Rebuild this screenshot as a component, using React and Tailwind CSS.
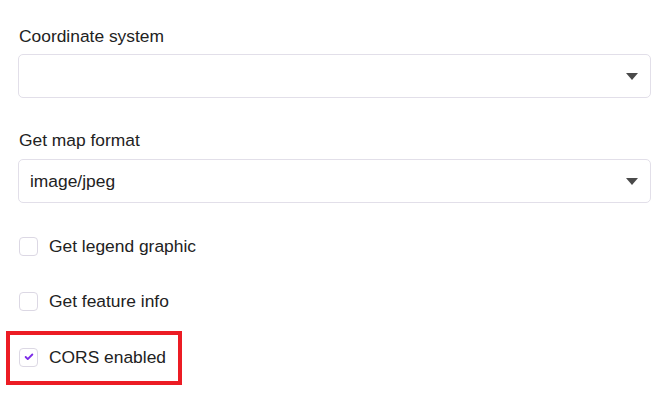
import { Check } from 'lucide-react';

function Caret() {
  return (
    <svg width="12" height="7" viewBox="0 0 12 7" className="shrink-0">
      <path d="M0 0 H12 L6 7 Z" fill="#4a4a4a" />
    </svg>
  );
}

function SelectBox({ value }) {
  return (
    <div className="flex h-[44px] w-[633px] items-center justify-between rounded-[5px] border border-[#e2dfe9] bg-white pl-[11px] pr-[12px]">
      <span className="text-[17.4px] text-[#222222]">{value}</span>
      <Caret />
    </div>
  );
}

function CheckRow({ label, checked }) {
  return (
    <label className="flex h-[24px] items-center gap-[11px]">
      <span className="flex h-[19px] w-[19px] items-center justify-center rounded-[4px] border border-[#dcd8e4] bg-white">
        {checked && <Check className="h-[10px] w-[10px] text-[#7c2be8]" strokeWidth={4.5} />}
      </span>
      <span className="text-[17.4px] text-[#222222]">{label}</span>
    </label>
  );
}

export default function App() {
  return (
    <div className="min-h-screen bg-white pl-[18px] pt-[24px] font-['Liberation_Sans',Arial,sans-serif]">
      <div className="flex flex-col">
        <div className="h-[24px] pl-[1px] text-[17.4px] leading-[24px] text-[#222222]">Coordinate system</div>
        <div className="mt-[6px]">
          <SelectBox value="" />
        </div>

        <div className="mt-[30px] h-[24px] pl-[1px] text-[17.4px] leading-[24px] text-[#222222]">Get map format</div>
        <div className="mt-[7px]">
          <SelectBox value="image/jpeg" />
        </div>

        <div className="mt-[31px] pl-[1px]">
          <CheckRow label="Get legend graphic" />
        </div>
        <div className="mt-[31px] pl-[1px]">
          <CheckRow label="Get feature info" />
        </div>

        <div className="-ml-[12px] mt-[18px] w-[176px] border-4 border-[#ec1c24] pb-[12px] pl-[9px] pt-[10px]">
          <CheckRow label="CORS enabled" checked />
        </div>
      </div>
    </div>
  );
}
